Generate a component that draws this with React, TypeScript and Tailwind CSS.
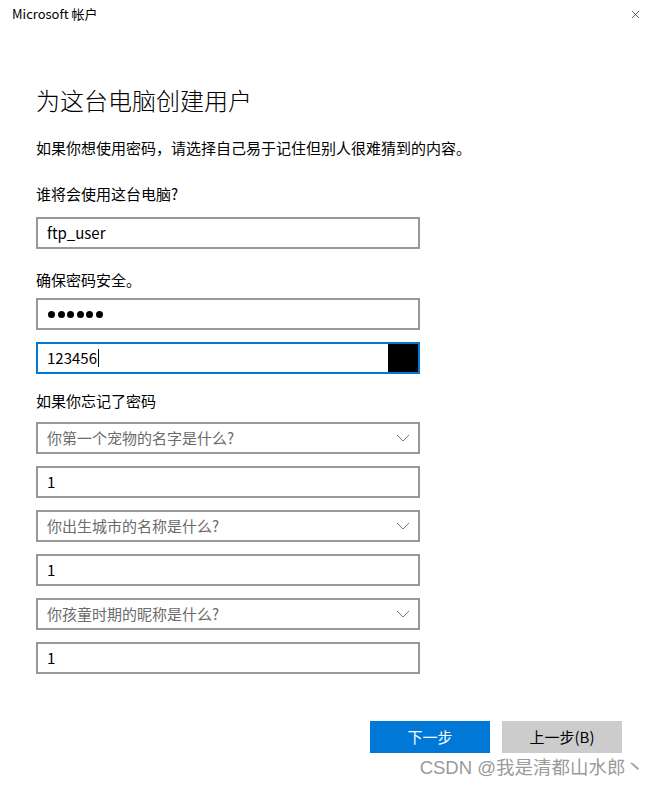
import { X } from "lucide-react";

const font = { fontFamily: '"Noto Sans CJK SC", "Noto Sans", sans-serif' };

function TextBox({ value, className = "" }: { value: string; className?: string }) {
  return (
    <div className={"w-[384px] h-[32px] border-2 border-[#999999] bg-white flex items-center pl-[9px] text-[15px] text-black " + className}>
      {value}
    </div>
  );
}

function Dropdown({ label, className = "" }: { label: string; className?: string }) {
  return (
    <div className={"w-[384px] h-[32px] border-2 border-[#999999] bg-white flex items-center justify-between pl-[9px] pr-[8px] text-[15px] text-[#6b6b6b] " + className}>
      <span>{label}</span>
      <svg width="14" height="8" viewBox="0 0 14 8" fill="none">
        <path d="M1 1 L7 7 L13 1" stroke="#777" strokeWidth="1" />
      </svg>
    </div>
  );
}

export default function App() {
  return (
    <div className="relative w-[657px] h-[788px] bg-white overflow-hidden" style={font}>
      {/* title bar */}
      <div className="h-[28px] flex items-center justify-between pl-[12px] pr-[15px]">
        <span className="text-[13px] leading-[16px] text-black">Microsoft 帐户</span>
        <X size={13} strokeWidth={1.1} className="text-black" />
      </div>

      <div className="pl-[36px] flex flex-col">
        <h1 className="mt-[56px] text-[24px] leading-[32px] font-light text-black">为这台电脑创建用户</h1>
        <p className="mt-[21px] text-[15px] leading-[22px] text-black">如果你想使用密码，请选择自己易于记住但别人很难猜到的内容。</p>

        <label className="mt-[25px] text-[15px] leading-[20px] text-black">谁将会使用这台电脑?</label>
        <TextBox value="ftp_user" className="mt-[13px]" />

        <label className="mt-[21px] text-[15px] leading-[20px] text-black">确保密码安全。</label>
        <div className="mt-[8px] w-[384px] h-[32px] border-2 border-[#999999] flex items-center gap-[2.5px] pl-[10px]">
          {[0, 1, 2, 3, 4, 5].map((i) => (
            <span key={i} className="w-[7px] h-[7px] rounded-full bg-black" />
          ))}
        </div>
        <div className="mt-[12px] w-[384px] h-[32px] border-2 border-[#0078d7] flex items-stretch">
          <div className="flex-1 flex items-center pl-[9px] text-[15px] text-black">
            123456
            <span className="ml-[1px] w-px h-[18px] bg-black" />
          </div>
          <div className="w-[30px] bg-black" />
        </div>

        <label className="mt-[17px] text-[15px] leading-[20px] text-black">如果你忘记了密码</label>
        <Dropdown label="你第一个宠物的名字是什么?" className="mt-[11px]" />
        <TextBox value="1" className="mt-[12px]" />
        <Dropdown label="你出生城市的名称是什么?" className="mt-[12px]" />
        <TextBox value="1" className="mt-[12px]" />
        <Dropdown label="你孩童时期的昵称是什么?" className="mt-[12px]" />
        <TextBox value="1" className="mt-[12px]" />
      </div>

      <div className="mt-[47px] flex justify-end gap-[12px] pr-[35px]">
        <button className="w-[120px] h-[32px] bg-[#0078d7] text-white text-[15px]">下一步</button>
        <button className="w-[120px] h-[32px] bg-[#cccccc] text-black text-[15px]">上一步(B)</button>
      </div>

      <div
        className="absolute right-[13px] top-[756px] text-[18.5px] leading-[24px] text-[#9a9a9a]"
        style={{ fontFamily: '"Liberation Sans", "Noto Sans CJK SC", sans-serif', textShadow: "1px 1px 1px #fff, -1px -1px 1px #fff" }}
      >
        CSDN @我是清都山水郎丶
      </div>
    </div>
  );
}
